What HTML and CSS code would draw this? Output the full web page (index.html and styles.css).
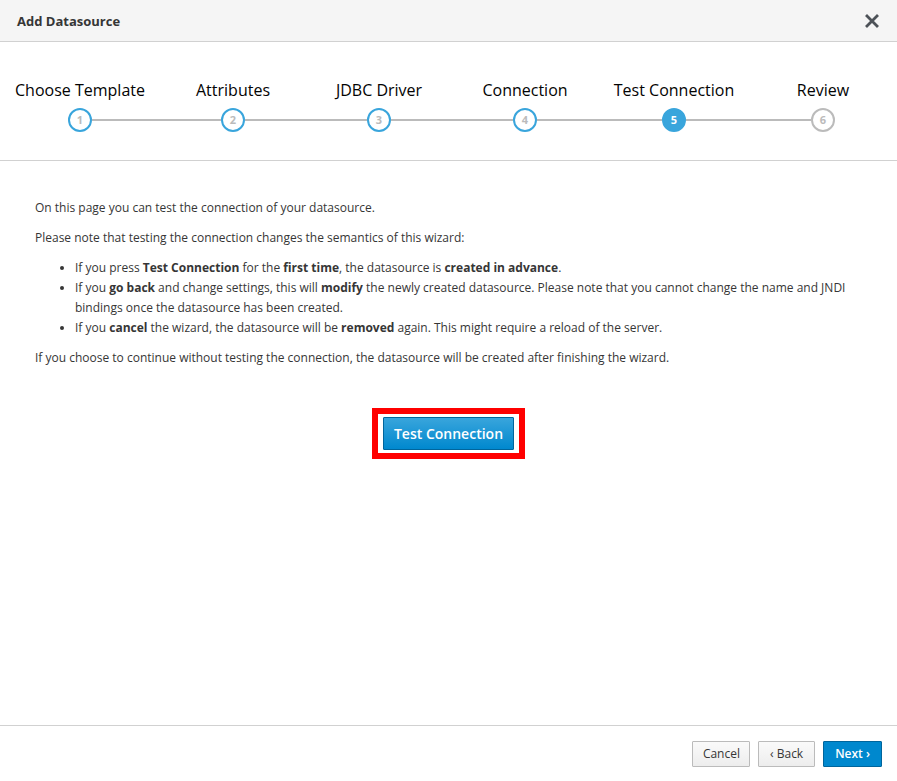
FILE: index.html
```html
<!DOCTYPE html>
<html lang="en">
<head>
    <meta charset="UTF-8">
    <title>Add Datasource</title>
    <link rel="stylesheet" href="styles.css">
</head>
<body>
<div class="modal">
    <div class="modal-header">
        <h4 class="modal-title">Add Datasource</h4>
        <button class="close" aria-label="Close">
            <svg width="14" height="14" viewBox="0 0 14 14">
                <path d="M2 2 L12 12 M12 2 L2 12" stroke="#4d5258" stroke-width="2.8" stroke-linecap="square"/>
            </svg>
        </button>
    </div>

    <ol class="steps">
        <li class="step done"><span class="step-label">Choose Template</span><div class="marker"><i class="seg"></i><span class="circle">1</span><i class="seg"></i></div></li>
        <li class="step done"><span class="step-label">Attributes</span><div class="marker"><i class="seg"></i><span class="circle">2</span><i class="seg"></i></div></li>
        <li class="step done"><span class="step-label">JDBC Driver</span><div class="marker"><i class="seg"></i><span class="circle">3</span><i class="seg"></i></div></li>
        <li class="step done"><span class="step-label">Connection</span><div class="marker"><i class="seg"></i><span class="circle">4</span><i class="seg"></i></div></li>
        <li class="step active"><span class="step-label">Test Connection</span><div class="marker"><i class="seg"></i><span class="circle">5</span><i class="seg"></i></div></li>
        <li class="step"><span class="step-label">Review</span><div class="marker"><i class="seg"></i><span class="circle">6</span><i class="seg"></i></div></li>
    </ol>

    <div class="modal-body">
        <p>On this page you can test the connection of your datasource.</p>
        <p>Please note that testing the connection changes the semantics of this wizard:</p>
        <ul>
            <li>If you press <b>Test Connection</b> for the <b>first time</b>, the datasource is <b>created in advance</b>.</li>
            <li>If you <b>go back</b> and change settings, this will <b>modify</b> the newly created datasource. Please note that you cannot change the name and JNDI bindings once the datasource has been created.</li>
            <li>If you <b>cancel</b> the wizard, the datasource will be <b>removed</b> again. This might require a reload of the server.</li>
        </ul>
        <p>If you choose to continue without testing the connection, the datasource will be created after finishing the wizard.</p>

        <div class="test-area">
            <div class="highlight-box">
                <button class="btn btn-primary btn-lg">Test Connection</button>
            </div>
        </div>
    </div>

    <div class="modal-footer">
        <button class="btn btn-default btn-cancel">Cancel</button>
        <button class="btn btn-default">&lsaquo; Back</button>
        <button class="btn btn-primary">Next &rsaquo;</button>
    </div>
</div>
</body>
</html>
```

FILE: styles.css
```css
html, body {
    margin: 0;
    height: 100%;
    overflow: hidden;
}

body {
    font-family: 'Open Sans', 'Liberation Sans', sans-serif;
    font-size: 12px;
    color: #363636;
    background: #fff;
}

.modal {
    height: 100%;
    display: flex;
    flex-direction: column;
}

.modal-header {
    height: 41px;
    background-color: #f5f5f5;
    border-bottom: 1px solid #d1d1d1;
    display: flex;
    align-items: center;
    justify-content: space-between;
    padding: 0 18px 0 17px;
    flex-shrink: 0;
}

.modal-title {
    margin: 0;
    font-size: 13px;
    font-weight: 700;
    color: #363636;
}

.close {
    border: none;
    background: none;
    padding: 0;
    display: flex;
    cursor: pointer;
}

/* wizard steps */
.steps {
    list-style: none;
    margin: 0;
    padding: 38px 0 28px 3px;
    display: grid;
    grid-template-columns: 154px 152px 140px 152px 146px 152px;
    border-bottom: 1px solid #d1d1d1;
    flex-shrink: 0;
    overflow: hidden;
}

.step {
    display: flex;
    flex-direction: column;
    align-items: center;
}

.step-label {
    font-size: 16px;
    line-height: 20px;
    color: #030303;
    white-space: nowrap;
}

.marker {
    margin-top: 8px;
    width: 100%;
    display: flex;
    align-items: center;
}

.seg {
    flex: 1;
    height: 2px;
    background-color: #bbb;
}

.step:first-child .seg:first-child,
.step:last-child .seg:last-child {
    visibility: hidden;
}

.circle {
    width: 20px;
    height: 20px;
    border: 2px solid #bbb;
    border-radius: 50%;
    background: #fff;
    color: #bbb;
    font-size: 11px;
    font-weight: 700;
    line-height: 20px;
    text-align: center;
}

.step.done .circle {
    border-color: #39a5dc;
}

.step.active .circle {
    border-color: #39a5dc;
    background-color: #39a5dc;
    color: #fff;
}

/* body */
.modal-body {
    flex: 1;
    padding: 37px 35px 0;
    line-height: 20px;
}

.modal-body p {
    margin: 0 0 10px;
}

.modal-body ul {
    margin: 0 0 10px;
    padding-left: 40px;
}

.test-area {
    margin-top: 40px;
    display: flex;
    justify-content: center;
}

.highlight-box {
    border: 6px solid #f00;
    padding: 3px 5px;
}

/* buttons */
.btn {
    font-family: inherit;
    font-size: 12px;
    line-height: 18px;
    padding: 3px 11px;
    border-radius: 1px;
    cursor: pointer;
}

.btn-default {
    color: #363636;
    background-image: linear-gradient(to bottom, #fafafa 0%, #ededed 100%);
    border: 1px solid #bbb;
}

.btn-cancel {
    padding: 3px 9px 3px 10px;
}

.btn-primary {
    color: #fff;
    font-weight: 600;
    background-color: #0088ce;
    border: 1px solid #00659c;
}

.btn-lg {
    font-size: 14px;
    line-height: 19px;
    padding: 6px 10px;
    background-image: linear-gradient(to bottom, #39a5dc 0%, #0088ce 100%);
}

.modal-footer {
    flex-shrink: 0;
    height: 56px;
    border-top: 1px solid #d1d1d1;
    display: flex;
    align-items: center;
    justify-content: flex-end;
    gap: 8px;
    padding: 0 15px;
    box-sizing: border-box;
}
```
